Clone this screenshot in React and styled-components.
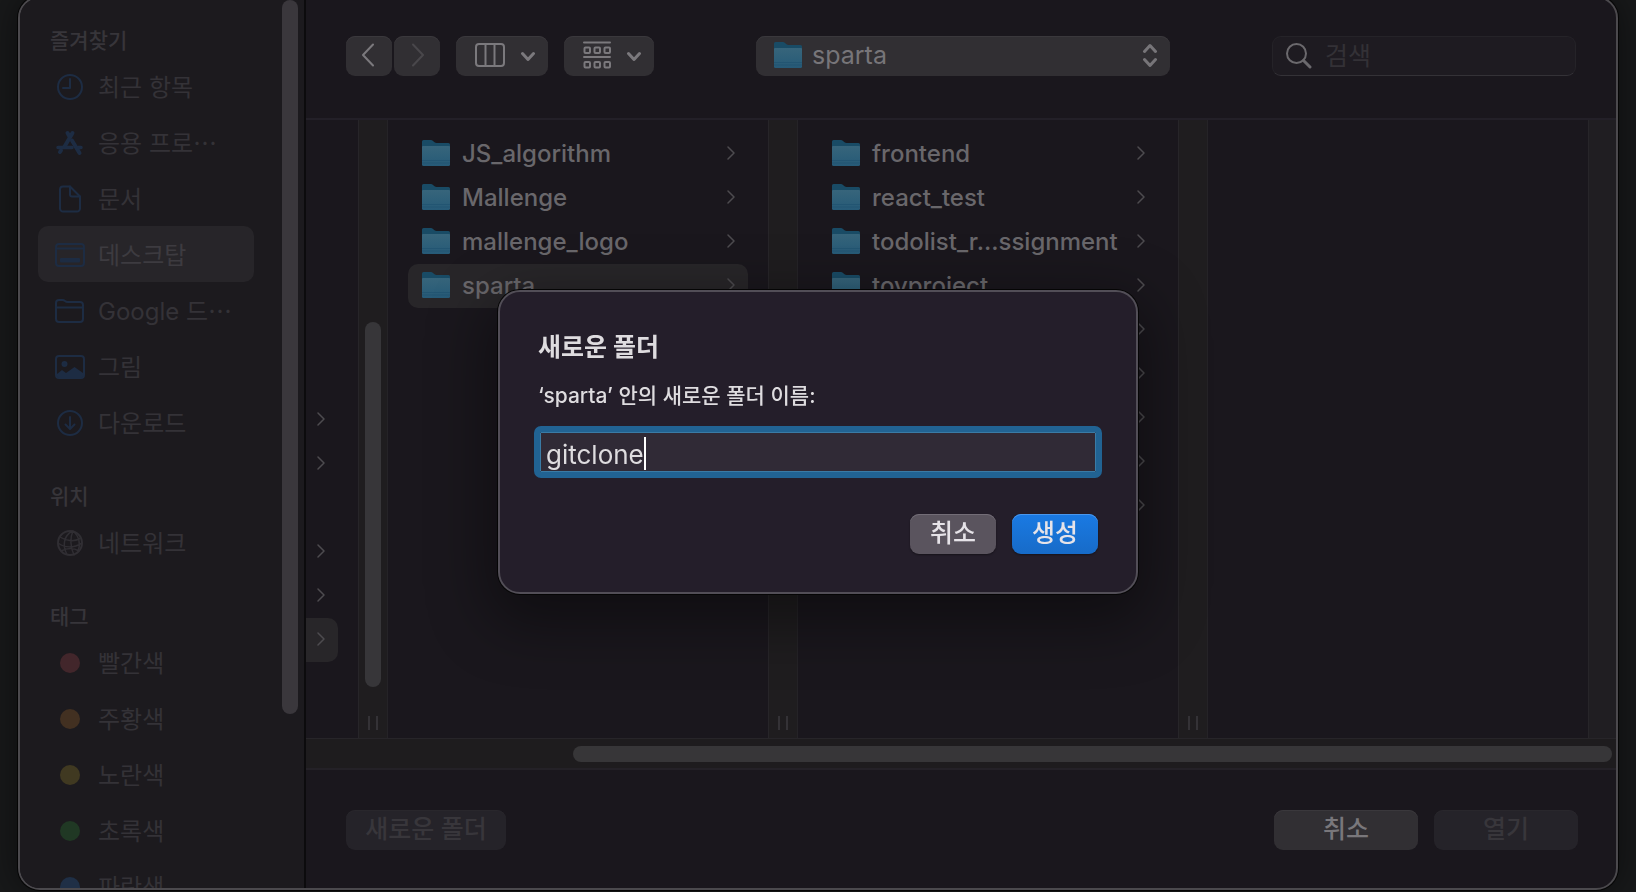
import React from 'react'
import styled, { createGlobalStyle } from 'styled-components'

const GlobalStyle = createGlobalStyle`
    *, *::before, *::after {
        box-sizing: border-box;
    }
    body {
        margin: 0;
        height: 100vh;
        overflow: hidden;
        background-color: #18191a;
        font-family: Inter, "Noto Sans CJK KR", sans-serif;
        font-size: 24px;
    }
    button, input, select {
        font: inherit;
        color: inherit;
        border: none;
        padding: 0;
        margin: 0;
        background: none;
    }
    ul {
        list-style: none;
        margin: 0;
        padding: 0;
    }
    svg {
        display: block;
        flex-shrink: 0;
    }
`

const Window = styled.div`
    display: grid;
    grid-template-columns: 286px minmax(0, 1fr);
    grid-template-rows: minmax(0, 1fr);
    height: calc(100vh + 2px);
    margin: -4px 18px 0;
    border: 2px solid #4b494d;
    border-radius: 22px;
    overflow: hidden;
    background-color: #1a171d;
    box-shadow: 0 0 0 1px #050505, 0 0 36px rgba(0, 0, 0, 0.5);
`

/* sidebar */
const Sidebar = styled.aside`
    display: flex;
    background-color: #1c1a1e;
    border-right: 2px solid #0c0b0d;
    overflow: hidden;
`
const SidebarList = styled.nav`
    flex: 1;
    padding: 24px 28px 0 18px;
`
const SidebarGroup = styled.section`
    margin-bottom: 28px;
`
const SidebarTitle = styled.h2`
    margin: 0;
    padding: 2px 0 0 12px;
    font-size: 21px;
    font-weight: 500;
    line-height: 34px;
    color: #37353a;
`
const SidebarItem = styled.a`
    display: flex;
    align-items: center;
    gap: 13px;
    height: 56px;
    padding: 0 0 2px 17px;
    border-radius: 10px;
    color: ${props => props.$active ? '#3d3b40' : '#343237'};
    background-color: ${props => props.$active ? '#272529' : 'transparent'};
    text-decoration: none;
    white-space: nowrap;
`
const SidebarIcon = styled.span`
    display: flex;
    justify-content: center;
    width: 30px;
    padding-top: 4px;
    color: ${props => props.$muted ? '#302e33' : '#1d2c43'};
`
const TagDot = styled.span`
    width: 20px;
    height: 20px;
    border-radius: 50%;
    background-color: ${props => props.$color};
`
const SidebarThumb = styled.div`
    width: 16px;
    height: 714px;
    margin: 2px 6px 0 0;
    border-radius: 8px;
    background-color: #3a373c;
`

/* toolbar */
const Main = styled.main`
    display: flex;
    flex-direction: column;
    min-width: 0;
`
const Toolbar = styled.header`
    display: flex;
    justify-content: space-between;
    padding: 38px 40px 42px;
    border-bottom: 2px solid #232028;
`
const ToolbarGroup = styled.div`
    display: flex;
    gap: ${props => props.$gap};
`
const ToolButton = styled.button`
    display: flex;
    align-items: center;
    justify-content: center;
    gap: 15px;
    width: ${props => props.$width};
    height: 40px;
    padding: ${props => props.$menu ? '0 0 2px 7px' : '0 0 2px'};
    border-radius: 9px;
    background-color: #312f33;
    box-shadow: inset 0 1px #3a383c;
    color: #7b797d;

    &:disabled {
        color: #49474b;
    }
`
const PathPicker = styled.label`
    display: flex;
    align-items: center;
    gap: 10px;
    width: 414px;
    height: 40px;
    padding: 0 12px 2px 18px;
    border-radius: 9px;
    background-color: #312f33;
    box-shadow: inset 0 1px #3a383c;
    color: #777579;
`
const PathSelect = styled.select`
    flex: 1;
    height: 36px;
    font-size: 25px;
    appearance: none;
    outline: none;
`
const SearchBox = styled.label`
    display: flex;
    align-items: center;
    gap: 13px;
    width: 304px;
    height: 40px;
    padding: 0 13px;
    border: 1px solid #252328;
    border-bottom-color: #343237;
    border-radius: 9px;
    background-color: #1e1b21;
    color: #6b696d;
`
const SearchInput = styled.input`
    flex: 1;
    min-width: 0;
    font-size: 25px;
    outline: none;

    &::placeholder {
        color: #333136;
        opacity: 1;
    }
`

/* column browser */
const Browser = styled.div`
    display: flex;
    flex: 1;
    min-height: 0;
    overflow: hidden;
`
const Column = styled.ul`
    flex: 0 0 ${props => props.$width};
    padding: ${props => props.$cut ? '14px 20px 0 0' : '12px 20px 0'};
`
const FileRow = styled.li`
    display: flex;
    align-items: center;
    gap: 12px;
    height: 44px;
    padding: ${props => props.$cut ? '0 13px 2px 0' : '0 13px 2px 14px'};
    border-radius: ${props => props.$cut ? '0 10px 10px 0' : '10px'};
    background-color: ${props => props.$active ? '#282629' : 'transparent'};
    color: #69676b;
    font-weight: 500;
    white-space: nowrap;

    svg:last-child {
        margin-left: auto;
        color: #4d4b4f;
    }
`
const Gutter = styled.div`
    display: flex;
    flex-direction: column;
    align-items: center;
    justify-content: flex-end;
    flex: ${props => props.$last ? '1 0 28px' : '0 0 30px'};
    gap: 29px;
    padding-bottom: 8px;
    border-left: 1px solid #272529;
    border-right: ${props => props.$last ? 'none' : '1px solid #252327'};
    background-color: ${props => props.$last ? '#201e22' : '#1f1d1f'};
`
const GutterThumb = styled.div`
    width: 16px;
    height: 365px;
    border-radius: 8px;
    background-color: #373639;
`
const GutterHandle = styled.div`
    width: 10px;
    height: 14px;
    border: solid #343236;
    border-width: 0 2px;
`
const ScrollTrack = styled.div`
    height: 32px;
    padding: 7px 4px 0 267px;
    border-top: 1px solid #272529;
    border-bottom: 2px solid #242127;
    background-color: #1e1c1e;
`
const ScrollThumb = styled.div`
    height: 16px;
    border-radius: 8px;
    background-color: #373638;
`

const Footer = styled.footer`
    display: flex;
    gap: 16px;
    padding: 40px 38px 38px 40px;
`
const PushButton = styled.button`
    width: ${props => props.$width};
    height: 40px;
    padding-bottom: 2px;
    border-radius: 9px;
    background-color: #312f33;
    box-shadow: inset 0 1px #3a383c;
    color: #79777b;
    font-size: 25px;
    font-weight: 500;
    line-height: 36px;

    &:first-child {
        margin-right: auto;
    }
    &:disabled {
        background-color: #252329;
        box-shadow: inset 0 1px #29272c;
        color: #38363b;
    }
`

/* new folder dialog */
const Overlay = styled.div`
    position: fixed;
    inset: 0;
    display: grid;
    place-items: center;
    padding-bottom: 8px;
`
const Dialog = styled.form`
    width: 640px;
    padding: 38px;
    border: 2px solid #524e57;
    border-radius: 22px;
    background-color: #241e2a;
    box-shadow: 0 0 0 1px #050505, 0 20px 60px 10px rgba(0, 0, 0, 0.4);
    color: #dedcdf;
`
const DialogTitle = styled.h1`
    margin: 0;
    font-size: 25px;
    font-weight: 700;
    line-height: 34px;
`
const DialogLabel = styled.label`
    display: block;
    margin-top: 19px;
    font-size: 21px;
    font-weight: 500;
    line-height: 26px;
`
const NameField = styled.div`
    display: flex;
    align-items: center;
    height: 40px;
    margin: 23px 2px 0;
    padding: 4px 5px 0;
    border: 1px solid #3a7ba5;
    outline: 6px solid #216393;
    border-radius: 1px;
    background-color: #302a36;
`
const NameInput = styled.input`
    field-sizing: content;
    font-size: 26px;
    outline: none;
    caret-color: transparent;
`
const Caret = styled.span`
    align-self: flex-start;
    width: 2px;
    height: 33px;
    background-color: #ffffff;
`
const DialogActions = styled.div`
    display: flex;
    justify-content: flex-end;
    gap: 16px;
    margin-top: 42px;
`
const DialogButton = styled.button`
    width: 86px;
    height: 40px;
    padding-bottom: 2px;
    border-radius: 9px;
    background: ${props => props.$primary ? 'linear-gradient(#1a7ae3, #176bc8)' : '#5a545e'};
    box-shadow: inset 0 1px ${props => props.$primary ? '#4a97ec' : '#736d77'}, 0 1px 2px rgba(0, 0, 0, 0.4);
    color: #e6e3e8;
    font-size: 25px;
    font-weight: 500;
    line-height: 36px;
`

const line = { fill: 'none', stroke: 'currentColor', strokeWidth: 2, strokeLinecap: 'round', strokeLinejoin: 'round' }

const ClockIcon = () => (
    <svg width="28" height="28" viewBox="0 0 28 28" {...line}>
        <circle cx="14" cy="14" r="12" />
        <path d="M14 6v9H7" />
    </svg>
)
const AppsIcon = () => (
    <svg width="28" height="28" viewBox="0 0 28 28" {...line} strokeWidth="4">
        <path d="M11.5 4l2 3.500M16.500 4L8.300 18M4 23l1-1.500" />
        <path d="M2 18.500h14M22 18.500h3" strokeWidth="3.500" />
        <path d="M16 11.500L23.500 24" />
    </svg>
)
const DocIcon = () => (
    <svg width="28" height="28" viewBox="0 0 28 28" {...line}>
        <path d="M14 1.500H7a3 3 0 0 0-3 3v19a3 3 0 0 0 3 3h14a3 3 0 0 0 3-3V11.500z" />
        <path d="M14 1.500v8a2 2 0 0 0 2 2h8" />
    </svg>
)
const DesktopIcon = () => (
    <svg width="30" height="24" viewBox="0 0 30 24" {...line}>
        <rect x="1" y="1" width="28" height="22" rx="3" />
        <path d="M1 5.500h28" />
        <rect x="5" y="15" width="20" height="4.500" rx="1" fill="currentColor" stroke="none" />
    </svg>
)
const FolderLineIcon = () => (
    <svg width="30" height="24" viewBox="0 0 30 24" {...line}>
        <path d="M1 4a3 3 0 0 1 3-3h3.500c2.500 0 2.500 2 5 2H25a3 3 0 0 1 3 3v14a3 3 0 0 1-3 3H4a3 3 0 0 1-3-3z" />
        <path d="M1 8.500h27" />
    </svg>
)
const PictureIcon = () => (
    <svg width="30" height="24" viewBox="0 0 30 24" {...line}>
        <rect x="1" y="1" width="28" height="22" rx="3" />
        <circle cx="9.500" cy="9" r="2" fill="currentColor" />
        <path d="M2 19l5-4 4 3 8.500-6L28 18v3a2 2 0 0 1-2 2H4a2 2 0 0 1-2-2z" fill="currentColor" stroke="none" />
    </svg>
)
const DownloadIcon = () => (
    <svg width="28" height="28" viewBox="0 0 28 28" {...line}>
        <circle cx="14" cy="14" r="12" />
        <path d="M14 8v11.500M9.500 15.500l4.500 4.500 4.500-4.500" />
    </svg>
)
const GlobeIcon = () => (
    <svg width="28" height="28" viewBox="0 0 28 28" {...line}>
        <circle cx="14" cy="14" r="12" />
        <path d="M17 2c-3 6-3 16 1 24M16 2C8 7 6 16 11 25.500M17 2c6 5 8 13 5 20M4 8c6 4 14 5 20 1.500M2 14c7 5 16 5 24 0M5 22c6-3 13-3 18 0" strokeWidth="1.500" />
    </svg>
)
const BackIcon = () => (
    <svg width="14" height="24" viewBox="0 0 14 24" {...line}>
        <path d="M11 1.500L1 12l10 10.500" />
    </svg>
)
const ForwardIcon = () => (
    <svg width="14" height="24" viewBox="0 0 14 24" {...line}>
        <path d="M3 1.500L13 12 3 22.500" />
    </svg>
)
const DownIcon = () => (
    <svg width="16" height="12" viewBox="0 0 16 12" {...line} strokeWidth="3">
        <path d="M2.500 4.500L8 10.500l5.500-6" />
    </svg>
)
const ColumnsIcon = () => (
    <svg width="30" height="24" viewBox="0 0 30 24" {...line}>
        <rect x="1" y="1" width="28" height="22" rx="3" />
        <path d="M10.500 1v22M19.500 1v22" />
    </svg>
)
const GroupIcon = () => (
    <svg width="28" height="28" viewBox="0 0 28 28" {...line}>
        <path d="M1 1.500h26M1 16h26" />
        <rect x="1.500" y="6.500" width="5.500" height="5.500" rx="1" />
        <rect x="11.500" y="6.500" width="5.500" height="5.500" rx="1" />
        <rect x="21.500" y="6.500" width="5.500" height="5.500" rx="1" />
        <rect x="1.500" y="21" width="5.500" height="5.500" rx="1" />
        <rect x="11.500" y="21" width="5.500" height="5.500" rx="1" />
        <rect x="21.500" y="21" width="5.500" height="5.500" rx="1" />
    </svg>
)
const UpDownIcon = () => (
    <svg width="16" height="24" viewBox="0 0 16 24" {...line} strokeWidth="3">
        <path d="M2.500 8.500L8 2.500l5.500 6M2.500 16.500L8 22.500l5.500-6" />
    </svg>
)
const SearchIcon = () => (
    <svg width="26" height="26" viewBox="0 0 26 26" {...line}>
        <circle cx="10.500" cy="10.500" r="9.500" />
        <path d="M17.500 17.500l6.500 6.500" strokeWidth="3" />
    </svg>
)
const ChevronIcon = () => (
    <svg width="8" height="14" viewBox="0 0 8 14" {...line} strokeWidth="1.500">
        <path d="M1 1l6 6-6 6" />
    </svg>
)
const FolderIcon = () => (
    <svg width="28" height="26" viewBox="0 0 28 26">
        <defs>
            <linearGradient id="folder" x1="0" y1="0" x2="0" y2="1">
                <stop offset="0" stopColor="#37657b" />
                <stop offset="1" stopColor="#265a77" />
            </linearGradient>
        </defs>
        <path d="M0 1.500Q0 0 1.500 0H9q1 0 2 1l1.500 1.300q1 .7 2 .7h12q1.500 0 1.500 1.500V12H0z" fill="#194b65" />
        <path d="M0 7q0-1 1-1h26q1 0 1 1v17.500q0 1.500-1.500 1.500h-25Q0 26 0 24.500z" fill="url(#folder)" />
        <path d="M0 20.500h28M0 23h28" stroke="#1f5270" strokeWidth=".7" />
    </svg>
)

const favorites = [
    { name: '최근 항목', Icon: ClockIcon },
    { name: '응용 프로⋯', Icon: AppsIcon },
    { name: '문서', Icon: DocIcon },
    { name: '데스크탑', Icon: DesktopIcon, active: true },
    { name: 'Google 드⋯', Icon: FolderLineIcon },
    { name: '그림', Icon: PictureIcon },
    { name: '다운로드', Icon: DownloadIcon },
]
const tags = [
    { name: '빨간색', color: '#42262b' },
    { name: '주황색', color: '#423021' },
    { name: '노란색', color: '#403921' },
    { name: '초록색', color: '#203824' },
    { name: '파란색', color: '#1f2f46' },
]

// the first column is scrolled out to the left, only its arrows stay in view
const parentRows = [0, 0, 0, 0, 0, 0, 1, 1, 0, 1, 1, 1]
const desktopFolders = ['JS_algorithm', 'Mallenge', 'mallenge_logo', 'sparta']
const spartaFolders = ['frontend', 'react_test', 'todolist_r...ssignment', 'toyproject', '', '', '', '', '']

const FolderColumn = ({ names, active }) => (
    <Column $width="380px">
        {names.map((name, i) => (
            <FileRow key={i} $active={name === active}>
                <FolderIcon />
                {name}
                <ChevronIcon />
            </FileRow>
        ))}
    </Column>
)

const App = () => {
    return (
        <>
            <GlobalStyle />
            <Window>
                <Sidebar>
                    <SidebarList>
                        <SidebarGroup>
                            <SidebarTitle>즐겨찾기</SidebarTitle>
                            {favorites.map(({ name, Icon, active }) => (
                                <SidebarItem href="#" key={name} $active={active}>
                                    <SidebarIcon><Icon /></SidebarIcon>
                                    {name}
                                </SidebarItem>
                            ))}
                        </SidebarGroup>
                        <SidebarGroup>
                            <SidebarTitle>위치</SidebarTitle>
                            <SidebarItem href="#">
                                <SidebarIcon $muted><GlobeIcon /></SidebarIcon>
                                네트워크
                            </SidebarItem>
                        </SidebarGroup>
                        <SidebarGroup>
                            <SidebarTitle>태그</SidebarTitle>
                            {tags.map(({ name, color }) => (
                                <SidebarItem href="#" key={name}>
                                    <SidebarIcon><TagDot $color={color} /></SidebarIcon>
                                    {name}
                                </SidebarItem>
                            ))}
                        </SidebarGroup>
                    </SidebarList>
                    <SidebarThumb />
                </Sidebar>

                <Main>
                    <Toolbar>
                        <ToolbarGroup $gap="16px">
                            <ToolbarGroup $gap="2px">
                                <ToolButton $width="46px" aria-label="뒤로"><BackIcon /></ToolButton>
                                <ToolButton $width="46px" aria-label="앞으로" disabled><ForwardIcon /></ToolButton>
                            </ToolbarGroup>
                            <ToolButton $width="92px" $menu aria-label="보기"><ColumnsIcon /><DownIcon /></ToolButton>
                            <ToolButton $width="90px" $menu aria-label="그룹"><GroupIcon /><DownIcon /></ToolButton>
                        </ToolbarGroup>
                        <PathPicker>
                            <FolderIcon />
                            <PathSelect aria-label="위치" defaultValue="sparta">
                                <option>sparta</option>
                            </PathSelect>
                            <UpDownIcon />
                        </PathPicker>
                        <SearchBox>
                            <SearchIcon />
                            <SearchInput type="text" placeholder="검색" aria-label="검색" />
                        </SearchBox>
                    </Toolbar>

                    <Browser>
                        <Column $width="52px" $cut>
                            {parentRows.map((arrow, i) => (
                                <FileRow key={i} $cut $active={i === 11}>
                                    {arrow ? <ChevronIcon /> : null}
                                </FileRow>
                            ))}
                        </Column>
                        <Gutter>
                            <GutterThumb />
                            <GutterHandle />
                        </Gutter>
                        <FolderColumn names={desktopFolders} active="sparta" />
                        <Gutter><GutterHandle /></Gutter>
                        <FolderColumn names={spartaFolders} />
                        <Gutter><GutterHandle /></Gutter>
                        <Column $width="380px" />
                        <Gutter $last />
                    </Browser>
                    <ScrollTrack>
                        <ScrollThumb />
                    </ScrollTrack>

                    <Footer>
                        <PushButton $width="160px" disabled>새로운 폴더</PushButton>
                        <PushButton $width="144px">취소</PushButton>
                        <PushButton $width="144px" disabled>열기</PushButton>
                    </Footer>
                </Main>
            </Window>

            <Overlay>
                <Dialog onSubmit={e => e.preventDefault()}>
                    <DialogTitle>새로운 폴더</DialogTitle>
                    <DialogLabel htmlFor="folder-name">‘sparta’ 안의 새로운 폴더 이름:</DialogLabel>
                    <NameField>
                        <NameInput id="folder-name" type="text" defaultValue="gitclone" />
                        <Caret />
                    </NameField>
                    <DialogActions>
                        <DialogButton type="button">취소</DialogButton>
                        <DialogButton type="submit" $primary>생성</DialogButton>
                    </DialogActions>
                </Dialog>
            </Overlay>
        </>
    )
}

export default App
